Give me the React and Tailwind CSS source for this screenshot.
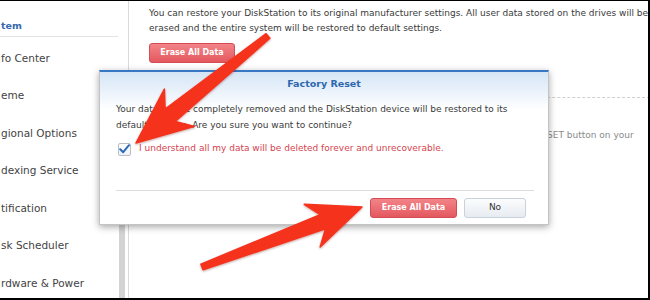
import React from 'react';

const sideItems = ['fo Center', 'eme', 'gional Options', 'dexing Service', 'tification', 'sk Scheduler', 'rdware & Power'];

// barbed, tapering arrow (Skitch-like) from tail to tip
function arrowPoints(tail, tip, size = 1) {
  const dx = tip[0] - tail[0];
  const dy = tip[1] - tail[1];
  const len = Math.hypot(dx, dy);
  const u = [dx / len, dy / len];
  const perp = [-u[1], u[0]];
  const at = (back, side) => [tip[0] - u[0] * back + perp[0] * side, tip[1] - u[1] * back + perp[1] * side];
  const pts = [
    [tail[0] - perp[0] * 3, tail[1] - perp[1] * 3],
    at(44 * size, -8 * size),
    at(56 * size, -24 * size),
    tip,
    at(56 * size, 24 * size),
    at(44 * size, 8 * size),
    [tail[0] + perp[0] * 3, tail[1] + perp[1] * 3],
  ];
  return pts.map(p => p.map(v => v.toFixed(1)).join(',')).join(' ');
}

export default function App() {
  return (
    <div className="relative w-[650px] h-[300px] overflow-hidden bg-white flex font-['DejaVu_Sans',sans-serif]">
      {/* sidebar */}
      <div className="w-[118px] shrink-0 flex flex-col">
        <div className="h-[37px] shrink-0 border-b border-[#e4e4e4] pt-[20px] pl-[1px] text-[9.5px] leading-[12px] font-bold text-[#3568ad]">
          tem
        </div>
        <div className="pt-[3px] flex flex-col">
          {sideItems.map(item => (
            <div key={item} className="h-[37.5px] flex items-center pl-[1px] text-[10.5px] text-[#434343] whitespace-nowrap">
              {item}
            </div>
          ))}
        </div>
      </div>

      {/* scroll track */}
      <div className="w-[11px] shrink-0 border-r border-[#dadada] flex flex-col">
        <div className="mt-[150px] ml-[1px] w-[6px] flex-1 bg-[#d3d3d3]" />
      </div>

      {/* main */}
      <div className="flex-1 min-w-0 pl-[20px] pt-[6px] flex flex-col">
        <p className="text-[9px] leading-[15px] text-[#3a3a3a] whitespace-nowrap">
          <span className="block">You can restore your DiskStation to its original manufacturer settings. All user data stored on the drives will be</span>
          <span className="block">erased and the entire system will be restored to default settings.</span>
        </p>
        <button className="mt-[7px] w-[86px] h-[20px] rounded-[3px] border border-[#d34b53] bg-linear-to-b from-[#f28388] to-[#e3585f] text-white text-[8px] font-bold">
          Erase All Data
        </button>
        <div className="mt-[34px] -ml-[20px] border-t border-dashed border-[#cfcfcf]" />
        <p className="mt-[30px] ml-[398px] text-[9px] leading-[15px] text-[#8a8a8a] whitespace-nowrap">
          SET button on your
        </p>
      </div>

      {/* dialog */}
      <div className="absolute left-[99px] top-[70px] w-[450px] h-[155px] flex flex-col border-t-2 border-t-[#3877c4] border-x border-b border-[#c4c4c4] bg-linear-to-b from-[#d5e5f6] to-white to-25% shadow-[0_2px_7px_rgba(0,0,0,0.35)]">
        <div className="h-[24px] flex items-center justify-center text-[9.5px] font-bold text-[#2c67ae]">
          Factory Reset
        </div>
        <div className="px-[16px] pt-[5px] flex flex-col">
          <p className="text-[9px] leading-[16px] text-[#3a3a3a]">
            Your data will be completely removed and the DiskStation device will be restored to its<br />
            default settings. Are you sure you want to continue?
          </p>
          <label className="mt-[9px] ml-[2px] h-[14px] flex items-center gap-[8px]">
            <span className="w-[13px] h-[13px] rounded-[2px] border border-[#b8bec6] bg-linear-to-b from-white to-[#eef2f6] flex items-center justify-center">
              <svg width="11" height="10" viewBox="0 0 11 10">
                <path d="M1.2 5.2 L4.2 8.2 L10 1.2" fill="none" stroke="#2b6bb6" strokeWidth="2" strokeLinecap="round" strokeLinejoin="round" />
              </svg>
            </span>
            <span className="text-[9px] text-[#d4434f] whitespace-nowrap">
              I understand all my data will be deleted forever and unrecoverable.
            </span>
          </label>
        </div>
        <div className="mt-[34px] ml-[16px] mr-[14px] h-px bg-[#dcdcdc]" />
        <div className="mt-[7px] pr-[22px] flex justify-end gap-[7px]">
          <button className="w-[87px] h-[20px] rounded-[3px] border border-[#d34b53] bg-linear-to-b from-[#f28388] to-[#e3585f] text-white text-[8px] font-bold">
            Erase All Data
          </button>
          <button className="w-[62px] h-[20px] rounded-[3px] border border-[#c9d1da] bg-linear-to-b from-[#fbfcfd] to-[#e7ecf1] text-[#333] text-[9px]">
            No
          </button>
        </div>
      </div>

      {/* red annotation arrows */}
      <svg className="absolute left-0 top-0 pointer-events-none" width="650" height="300" viewBox="0 0 650 300">
        <defs>
          <filter id="ash" x="-10%" y="-10%" width="120%" height="120%">
            <feDropShadow dx="0" dy="1" stdDeviation="1" floodColor="#5a0000" floodOpacity="0.35" />
          </filter>
        </defs>
        <g filter="url(#ash)" fill="#f5331d" stroke="#f5331d" strokeWidth="1.5" strokeLinejoin="round">
          <polygon points={arrowPoints([268, 36], [136, 143])} />
          <polygon points={arrowPoints([202, 267], [362, 207], 0.95)} />
        </g>
      </svg>

      {/* black frame */}
      <div className="absolute inset-0 border-t border-r-2 border-b-2 border-black pointer-events-none" />
    </div>
  );
}
